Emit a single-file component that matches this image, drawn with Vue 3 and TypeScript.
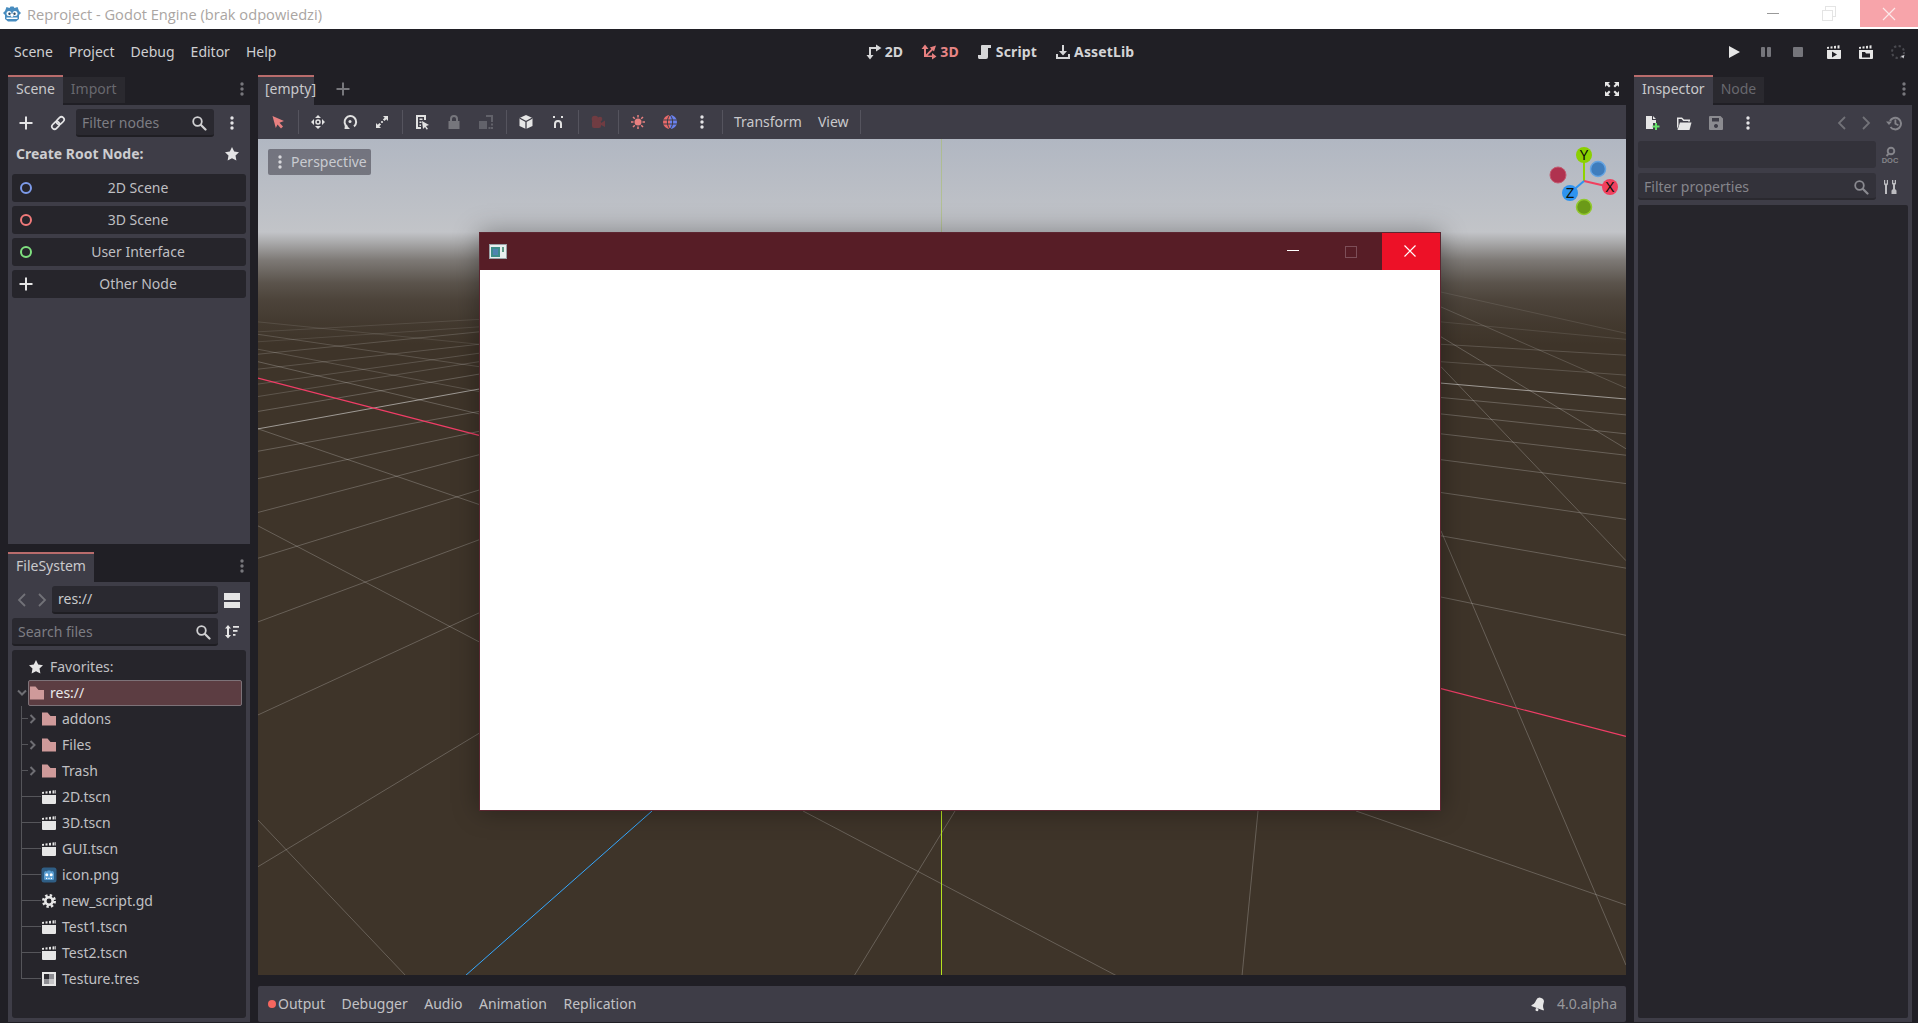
<script setup lang="ts">
type Seg = [number, number, number, number]

const rootButtons = [
  { label: '2D Scene', icon: 'ring', color: '#7d9bea' },
  { label: '3D Scene', icon: 'ring', color: '#f07a7a' },
  { label: 'User Interface', icon: 'ring', color: '#7fe07f' },
  { label: 'Other Node', icon: 'add', color: '#e6e6e6' },
]

const files = [
  { name: 'addons', icon: 'folder', branch: true },
  { name: 'Files', icon: 'folder', branch: true },
  { name: 'Trash', icon: 'folder', branch: true },
  { name: '2D.tscn', icon: 'clap', branch: false },
  { name: '3D.tscn', icon: 'clap', branch: false },
  { name: 'GUI.tscn', icon: 'clap', branch: false },
  { name: 'icon.png', icon: 'logo', branch: false },
  { name: 'new_script.gd', icon: 'gear', branch: false },
  { name: 'Test1.tscn', icon: 'clap', branch: false },
  { name: 'Test2.tscn', icon: 'clap', branch: false },
  { name: 'Testure.tres', icon: 'texture', branch: false },
]

const tools = [
  'select', '|', 'move', 'rotate', 'scale', '|', 'listsel', 'lock', 'group', '|',
  'cube', 'snap', '|', 'camera', '|', 'sun', 'globe', 'dots', '|',
]

const bottomTabs = ['Debugger', 'Audio', 'Animation', 'Replication']

// Floor grid, measured per visible area of the viewport (page coordinates).
const fromLeft = (y0: number, y1: number): Seg => [258, 200 + y0 / 2.01, 479, 200 + y1 / 2.01]
const fromRight = (y0: number, y1: number): Seg => [1441, 200 + y0 / 2.01, 1626, 200 + y1 / 2.01]

const gridLines: Seg[] = [
  ...[
    [1340, 1072], [1035, 830], [848, 683], [720, 583], [628, 512], [560, 465], [505, 425],
    [425, 350], [395, 325], [370, 308], [340, 290], [310, 265], [285, 255], [265, 240],
    [655, 888], [460, 612], [325, 430], [300, 385], [270, 335], [245, 290],
  ].map(([a, b]) => fromLeft(a, b)),
  ...[
    [245, 280], [290, 312], [325, 352], [397, 432], [430, 470], [470, 513], [522, 570],
    [588, 642], [675, 740], [798, 875], [665, 1538], [335, 725], [275, 500], [215, 378], [185, 268],
  ].map(([a, b]) => fromRight(a, b)),
  [258, 820, 406, 976],
  [803, 811, 1117, 976],
  [955, 811, 854, 976],
  [1258, 811, 1242, 976],
  [1356, 811, 1626, 905],
]
const lineOpacity = (l: Seg): number => {
  const y = (l[1] + l[3]) / 2
  return y < 335 ? 0.1 : y < 385 ? 0.16 : 0.22
}
const brightLines: Seg[] = [fromLeft(460, 380), fromRight(368, 400)]
const redLines: Seg[] = [fromLeft(358, 473), fromRight(982, 1078)]
</script>

<template>
  <div class="app">
    <svg class="sprite" aria-hidden="true">
      <symbol id="add" viewBox="0 0 16 16"><path fill="currentColor" d="M7 1.500h2V7h5.500v2H9v5.500H7V9H1.500V7H7z" /></symbol>
      <symbol id="dots" viewBox="0 0 16 16"><g fill="currentColor"><circle cx="8" cy="3" r="1.700" /><circle cx="8" cy="8" r="1.700" /><circle cx="8" cy="13" r="1.700" /></g></symbol>
      <symbol id="search" viewBox="0 0 16 16"><g fill="none" stroke="currentColor" stroke-width="1.800" stroke-linecap="round"><circle cx="6.500" cy="6.500" r="4.300" /><path d="M10 10l4.500 4.500" stroke-width="2.200" /></g></symbol>
      <symbol id="star" viewBox="0 0 16 16"><polygon fill="currentColor" points="8,1 10.200,5.600 15,6.200 11.500,9.600 12.400,14.600 8,12.200 3.600,14.600 4.500,9.600 1,6.200 5.800,5.600" /></symbol>
      <symbol id="link" viewBox="0 0 16 16"><g fill="none" stroke="currentColor" stroke-width="1.700" transform="rotate(-45 8 8)"><rect x="0.500" y="5.300" width="8.500" height="5.400" rx="2.700" /><rect x="7" y="5.300" width="8.500" height="5.400" rx="2.700" /></g></symbol>
      <symbol id="ring" viewBox="0 0 16 16"><circle cx="8" cy="8" r="5" fill="none" stroke="currentColor" stroke-width="2" /></symbol>
      <symbol id="select" viewBox="0 0 16 16"><polygon fill="#e88080" points="2.500,2 14,7 9.500,8.800 13,12.500 11,14.500 7.500,10.500 5.800,14" /></symbol>
      <symbol id="move" viewBox="0 0 16 16"><g fill="#e2e2e2"><path d="M8 1l3 3H5zM8 15l-3-3h6zM1 8l3-3v6zM15 8l-3 3V5z" /></g><circle cx="8" cy="8" r="2" fill="none" stroke="#e2e2e2" stroke-width="1.500" /></symbol>
      <symbol id="rotate" viewBox="0 0 16 16"><path d="M5.300 12.800A5.800 5.800 0 1 1 12 12.400" fill="none" stroke="#e2e2e2" stroke-width="2" /><polygon fill="#e2e2e2" points="2.500,15 8,15 3,9.800" /><circle cx="8" cy="7.500" r="1.500" fill="#e2e2e2" /></symbol>
      <symbol id="scale" viewBox="0 0 16 16"><path fill="#e2e2e2" d="M9 2h5v5l-1.700-1.700-1.800 1.800-1.600-1.600 1.800-1.800zM7 14H2V9l1.700 1.700 1.800-1.800 1.600 1.600-1.800 1.800z" /><circle cx="8" cy="8" r="1.100" fill="#e2e2e2" /></symbol>
      <symbol id="listsel" viewBox="0 0 16 16"><path fill="#e2e2e2" d="M2 1h10v5h-2V3H4v10h3v2H2zM5.500 4.500h3v1.500h-3zM5.500 7.500h2v1.500h-2zM5.500 10.500h1.500v1.500H5.500z" /><polygon fill="#e2e2e2" points="8,7 15,11 12,12 14,15 12.500,15.500 11,13 9,15" /></symbol>
      <symbol id="lock" viewBox="0 0 16 16"><path fill="#76767c" d="M4 7V5a4 4 0 0 1 8 0v2h1.500v8h-11V7zm2 0h4V5a2 2 0 0 0-4 0z" /></symbol>
      <symbol id="group" viewBox="0 0 16 16"><path fill="#62626a" d="M1 7h8v8H1zM8 1h7v7H13V3H8z" /><path fill="#62626a" d="M13 13h2v2h-2zM13 9.500h2v2h-2zM10.500 13h2v2h-2z" /></symbol>
      <symbol id="cube" viewBox="0 0 16 16"><polygon fill="#e6e6e6" points="8,1 14.500,4 14.500,12 8,15 1.500,12 1.500,4" /><path fill="none" stroke="#3e3d47" stroke-width="1.300" d="M1.500 4L8 7.500 14.500 4M8 7.500V15" /></symbol>
      <symbol id="snap" viewBox="0 0 16 16"><path fill="#e2e2e2" d="M3 2h2v2H3zM11 2h2v2h-2zM4 14V10a4 4 0 0 1 8 0v4h-2v-4a2 2 0 0 0-4 0v4z" /></symbol>
      <symbol id="camera" viewBox="0 0 16 16"><g fill="#703c42"><circle cx="5" cy="5" r="3.300" /><circle cx="10" cy="5" r="2.300" /><rect x="2" y="6" width="9" height="8" rx="2" /><polygon points="11,9 15,6.500 15,13 11,11" /></g></symbol>
      <symbol id="sun" viewBox="0 0 16 16"><circle cx="8" cy="8" r="3.500" fill="#e88080" /><g stroke="#e88080" stroke-width="1.500"><path d="M8 1v2.500M8 12.500V15M1 8h2.500M12.500 8H15M3 3l1.800 1.800M11.200 11.200L13 13M13 3l-1.800 1.800M4.800 11.200L3 13" /></g></symbol>
      <symbol id="globe" viewBox="0 0 16 16"><path fill="#e86a6a" d="M8 1a7 7 0 0 0 0 14z" /><path fill="#6a82ef" d="M8 1a7 7 0 0 1 0 14z" /><path fill="none" stroke="#3e3d47" stroke-width="1" d="M8 1c-3.500 3-3.500 11 0 14M8 1c3.500 3 3.500 11 0 14M1.300 6h13.400M1.300 10h13.400" /></symbol>
      <symbol id="fullscreen" viewBox="0 0 16 16"><path fill="#e6e6e6" d="M1 1h5L4.300 2.700 6.500 5 5 6.500 2.700 4.300 1 6zM15 1v5l-1.700-1.700L11 6.500 9.500 5l2.200-2.300L10 1zM1 15v-5l1.700 1.700L5 9.500 6.500 11l-2.200 2.300L6 15zM15 15h-5l1.700-1.700L9.500 11 11 9.500l2.300 2.200L15 10z" /></symbol>
      <symbol id="play" viewBox="0 0 16 16"><path fill="#e6e6e6" d="M3 2v12l11-6z" /></symbol>
      <symbol id="pause" viewBox="0 0 16 16"><rect x="3" y="3" width="4" height="10" rx="1" fill="#75757b" /><rect x="9" y="3" width="4" height="10" rx="1" fill="#75757b" /></symbol>
      <symbol id="stop" viewBox="0 0 16 16"><rect x="3" y="3" width="10" height="10" rx="1" fill="#75757b" /></symbol>
      <symbol id="clap" viewBox="0 0 16 16"><path fill="#e6e6e6" d="M1 6h14v8a1 1 0 0 1-1 1H2a1 1 0 0 1-1-1zM1 3l2-.3v2H1zM4.500 2.500l2-.3v2.400h-2zM8 2l2-.300v2.900H8zM11.500 1.500l2-.300v3.400h-2zM14.300 1.200L15 1v3.600h-.7z" /></symbol>
      <symbol id="clapplay" viewBox="0 0 16 16"><path fill="#e6e6e6" d="M1 6h14v8a1 1 0 0 1-1 1H2a1 1 0 0 1-1-1zM1 3l2-.3v2H1zM4.500 2.500l2-.3v2.400h-2zM8 2l2-.300v2.900H8zM11.500 1.500l2-.300v3.400h-2z" /><path fill="#201f25" d="M6 7.500v6l5-3z" /></symbol>
      <symbol id="clapfolder" viewBox="0 0 16 16"><path fill="#e6e6e6" d="M1 6h14v8a1 1 0 0 1-1 1H2a1 1 0 0 1-1-1zM1 3l2-.3v2H1zM4.500 2.500l2-.3v2.400h-2zM8 2l2-.300v2.900H8zM11.500 1.500l2-.300v3.400h-2z" /><path fill="#201f25" d="M4 8h3l1 1.500h4v4H4z" /></symbol>
      <symbol id="spin" viewBox="0 0 16 16"><circle cx="8" cy="8" r="6" fill="none" stroke="#4a4a50" stroke-width="2" stroke-dasharray="2.300 2.400" /><path fill="#cfcfd2" d="M11 12l3.500-1-1 3.500z" /></symbol>
      <symbol id="folder" viewBox="0 0 16 16"><path fill="#cf9a9a" d="M1 1.500h5.500L9.500 5H15v9.500H1z" /></symbol>
      <symbol id="gear" viewBox="0 0 16 16"><circle cx="8" cy="8" r="5.600" fill="none" stroke="#e6e6e6" stroke-width="2.800" stroke-dasharray="2.300 2.100" /><circle cx="8" cy="8" r="3.700" fill="none" stroke="#e6e6e6" stroke-width="2.500" /></symbol>
      <symbol id="texture" viewBox="0 0 16 16"><rect x="1" y="1" width="14" height="14" fill="#e6e6e6" /><rect x="3" y="3" width="5" height="5" fill="#2e2d33" /><rect x="8" y="3" width="5" height="5" fill="#8d8d92" /><rect x="3" y="8" width="5" height="5" fill="#8d8d92" /><rect x="8" y="8" width="5" height="5" fill="#c4c4c6" /></symbol>
      <symbol id="logo" viewBox="0 0 16 16"><rect x="0.500" y="0.500" width="15" height="15" rx="2.500" fill="#2f5e85" /><path fill="#5b9fd3" d="M3 6l1-2 2 .6.700-1.100h2.600l.7 1.100 2-.6 1 2v6.500l-2 .5H5l-2-.5z" /><g fill="#fff"><circle cx="5.800" cy="7.800" r="1.500" /><circle cx="10.200" cy="7.800" r="1.500" /><rect x="5" y="10.800" width="1.200" height="1.200" /><rect x="7.400" y="10.800" width="1.200" height="1.200" /><rect x="9.800" y="10.800" width="1.200" height="1.200" /></g></symbol>
      <symbol id="bell" viewBox="0 0 16 16"><g transform="rotate(20 8 8)"><path fill="#e6e6e6" d="M8 1.500a4 4 0 0 1 4 4c0 3.500 1.500 5 2.500 6v1h-13v-1c1-1 2.500-2.500 2.500-6a4 4 0 0 1 4-4z" /><circle cx="8" cy="14" r="1.500" fill="#e6e6e6" /></g></symbol>
      <symbol id="tools" viewBox="0 0 16 16"><path fill="#bdbdc1" d="M2 1h1.200v3.500h1.600V1H6v4.200L5 6.500V15H3V6.500L2 5.200zM10 1h1.300v3h1.400V1H14v3.800l-1 1.200v4l1.500 1.500V15h-5v-3.500L11 10V6l-1-1.200z" /></symbol>
      <symbol id="back" viewBox="0 0 16 16"><path fill="none" stroke="#727278" stroke-width="1.800" d="M11 2L5 8l6 6" /></symbol>
      <symbol id="forward" viewBox="0 0 16 16"><path fill="none" stroke="#727278" stroke-width="1.800" d="M5 2l6 6-6 6" /></symbol>
      <symbol id="history" viewBox="0 0 16 16"><path fill="none" stroke="#85858b" stroke-width="2" d="M4 6a5.800 5.800 0 1 1 .5 6" /><path fill="#85858b" d="M0 6.500h6L3 10zM8.500 4.500h1.800v3.800l2.500 1.200-.8 1.500-3.500-1.800z" /></symbol>
      <symbol id="newfile" viewBox="0 0 16 16"><path fill="#e6e6e6" d="M2 1h6v4h4v3H9v6H2zM9 1l3 3H9z" /><path fill="#65e06a" d="M11 8h2v2.500h2.500v2H13V15h-2v-2.500H8.500v-2H11z" /></symbol>
      <symbol id="open" viewBox="0 0 16 16"><path fill="#e6e6e6" d="M1 2.500h5l2 2h6v2h-2V6H7.300L5.500 4H2.500v6.500L1 14z" /><path fill="#e6e6e6" d="M4 7.500h11.500L13.500 15H1.500z" /></symbol>
      <symbol id="save" viewBox="0 0 16 16"><path fill="#8b8b90" fill-rule="evenodd" d="M1 2a1 1 0 0 1 1-1h10.500L15 3.500V14a1 1 0 0 1-1 1H2a1 1 0 0 1-1-1zM4 3v3.500h7V3zM8 9a2 2 0 1 0 .01 0z" /></symbol>
      <symbol id="split" viewBox="0 0 16 16"><rect x="0" y="1" width="16" height="7" fill="#e6e6e6" /><rect x="0" y="10" width="16" height="6" fill="#e6e6e6" /></symbol>
      <symbol id="sort" viewBox="0 0 16 16"><path fill="#e6e6e6" d="M4 1l3 3.500H5V11h2l-3 3.500L1 11h2V4.500H1zM9 2h6v1.800H9zM9 6h4.500v1.800H9zM9 10h2.500v1.800H9z" /></symbol>
      <symbol id="godot2d" viewBox="0 0 16 16"><path fill="#d6d6d8" d="M3 3h7V.5L15.500 4 10 7.500V5H5v6h2.500L4 15.500.5 11H3z" /></symbol>
      <symbol id="godot3d" viewBox="0 0 16 16"><g fill="#e88080"><path d="M4 .5L7.500 5H5v5.600L10.300 5 8.800 3.500 15 1.500l-2 6-1.300-1.300L6.500 11.500H11V9l4.500 3.500L11 15.500V13H3V5H.5z" /></g></symbol>
      <symbol id="script" viewBox="0 0 16 16"><path fill="#d6d6d8" d="M5 1h9v3h-3v9a2 2 0 0 1-2 2H2a2 2 0 0 1-1-2v-2h3V2a1 1 0 0 1 1-1z" /></symbol>
      <symbol id="assetlib" viewBox="0 0 16 16"><path fill="#d6d6d8" d="M7 1h2v6h3l-4 4.500L4 7h3zM1 10h2v3h10v-3h2v5H1z" /></symbol>
      <symbol id="chevdown" viewBox="0 0 12 12"><path fill="none" stroke="#6e6e73" stroke-width="2" d="M2 3.500l4 4 4-4" /></symbol>
      <symbol id="chevright" viewBox="0 0 12 12"><path fill="none" stroke="#6e6e73" stroke-width="2" d="M3.500 2l4 4-4 4" /></symbol>
      <symbol id="godot" viewBox="0 0 18 18"><path fill="#478cbf" d="M2 6l1.500-4 3 1 1-1.500h3l1 1.500 3-1L16 6l2 2-2 2v4l-3 2.500H5L2 14v-4L0 8z" /><circle cx="6" cy="8.500" r="2.500" fill="#fff" /><circle cx="12" cy="8.500" r="2.500" fill="#fff" /><circle cx="6.500" cy="8.700" r="1.200" fill="#2f4a63" /><circle cx="11.500" cy="8.700" r="1.200" fill="#2f4a63" /><rect x="7.900" y="9" width="2.200" height="2.800" fill="#fff" /><path fill="#fff" d="M3.500 12.500h11v1.500h-11z" /></symbol>
    </svg>

    <header class="title-bar">
      <svg class="logo"><use href="#godot" /></svg>
      <span class="title-text">Reproject - Godot Engine (brak odpowiedzi)</span>
      <div class="win-controls">
        <span class="wc wc-min"><i class="wc-dash" /></span>
        <span class="wc wc-max"><i class="wc-box wc-box-back" /><i class="wc-box" /></span>
        <span class="wc wc-close">
          <svg width="14" height="14" viewBox="0 0 14 14"><path d="M1 1l12 12M13 1L1 13" stroke="#fbe9ea" stroke-width="1.200" /></svg>
        </span>
      </div>
    </header>

    <nav class="menu-bar">
      <div class="menu-left">
        <span>Scene</span><span>Project</span><span>Debug</span><span>Editor</span><span>Help</span>
      </div>
      <div class="menu-center">
        <span class="ws"><svg class="ic14"><use href="#godot2d" /></svg>2D</span>
        <span class="ws ws-on"><svg class="ic14"><use href="#godot3d" /></svg>3D</span>
        <span class="ws"><svg class="ic14"><use href="#script" /></svg>Script</span>
        <span class="ws"><svg class="ic14"><use href="#assetlib" /></svg>AssetLib</span>
      </div>
      <div class="menu-right">
        <svg class="ic"><use href="#play" /></svg>
        <svg class="ic"><use href="#pause" /></svg>
        <svg class="ic stop-ic"><use href="#stop" /></svg>
        <svg class="ic"><use href="#clapplay" /></svg>
        <svg class="ic"><use href="#clapfolder" /></svg>
        <svg class="ic"><use href="#spin" /></svg>
      </div>
    </nav>

    <main class="main">
      <section class="left-col">
        <div class="dock scene-dock">
          <div class="tabs">
            <span class="tab tab-on">Scene</span>
            <span class="tab tab-off">Import</span>
            <svg class="ic tabs-menu"><use href="#dots" /></svg>
          </div>
          <div class="panel">
            <div class="scene-tools">
              <span class="btn"><svg class="ic"><use href="#add" /></svg></span>
              <span class="btn"><svg class="ic"><use href="#link" /></svg></span>
              <div class="input scene-filter">
                <span>Filter nodes</span>
                <svg class="ic"><use href="#search" /></svg>
              </div>
              <span class="btn"><svg class="ic"><use href="#dots" /></svg></span>
            </div>
            <div class="root-head">
              <b>Create Root Node:</b>
              <svg class="ic"><use href="#star" /></svg>
            </div>
            <div class="root-list">
              <div v-for="b in rootButtons" :key="b.label" class="root-btn">
                <svg class="ic" :style="{ color: b.color }"><use :href="'#' + b.icon" /></svg>
                <span>{{ b.label }}</span>
              </div>
            </div>
          </div>
        </div>

        <div class="dock fs-dock">
          <div class="tabs">
            <span class="tab tab-on">FileSystem</span>
            <svg class="ic tabs-menu"><use href="#dots" /></svg>
          </div>
          <div class="panel fs-panel">
            <div class="fs-row">
              <svg class="ic nav-ic"><use href="#back" /></svg>
              <svg class="ic nav-ic"><use href="#forward" /></svg>
              <div class="input fs-path"><span class="bright">res://</span></div>
              <svg class="ic split-ic"><use href="#split" /></svg>
            </div>
            <div class="fs-row fs-row-search">
              <div class="input fs-search">
                <span>Search files</span>
                <svg class="ic"><use href="#search" /></svg>
              </div>
              <svg class="ic sort-ic"><use href="#sort" /></svg>
            </div>
            <div class="tree">
              <div class="row row-fav">
                <svg class="ic row-star"><use href="#star" /></svg>
                <span>Favorites:</span>
              </div>
              <div class="row row-res">
                <svg class="chev"><use href="#chevdown" /></svg>
                <div class="res-sel">
                  <svg class="ic"><use href="#folder" /></svg>
                  <span>res://</span>
                </div>
              </div>
              <div class="children">
                <div v-for="f in files" :key="f.name" class="row row-child" :class="{ 'has-chev': f.branch }">
                  <svg v-if="f.branch" class="chev"><use href="#chevright" /></svg>
                  <svg class="ic"><use :href="'#' + f.icon" /></svg>
                  <span>{{ f.name }}</span>
                </div>
              </div>
            </div>
          </div>
        </div>
      </section>

      <section class="center-col">
        <div class="tabs center-tabs">
          <span class="tab tab-on">[empty]</span>
          <svg class="ic tab-add"><use href="#add" /></svg>
          <svg class="ic tabs-menu"><use href="#fullscreen" /></svg>
        </div>
        <div class="toolbar">
          <template v-for="(t, i) in tools" :key="i">
            <i v-if="t === '|'" class="sep"><i class="sep-line" /></i>
            <span v-else class="btn"><svg class="ic"><use :href="'#' + t" /></svg></span>
          </template>
          <span class="tool-text tool-transform">Transform</span>
          <span class="tool-text tool-view">View</span>
          <i class="sep"><i class="sep-line" /></i>
        </div>

        <div class="viewport">
          <svg class="scene3d" viewBox="258 139 1368 836" preserveAspectRatio="none">
            <defs>
              <linearGradient id="sky" gradientUnits="userSpaceOnUse" x1="0" y1="139" x2="0" y2="232">
                <stop offset="0" stop-color="#b1b7c2" />
                <stop offset="1" stop-color="#c2c4c8" />
              </linearGradient>
              <linearGradient id="fog" gradientUnits="userSpaceOnUse" x1="0" y1="232" x2="0" y2="345">
                <stop offset="0" stop-color="#c2c4c8" stop-opacity="1" />
                <stop offset="0.1" stop-color="#c2c4c8" stop-opacity="0.8" />
                <stop offset="0.25" stop-color="#c2c4c8" stop-opacity="0.48" />
                <stop offset="0.45" stop-color="#c2c4c8" stop-opacity="0.22" />
                <stop offset="0.6" stop-color="#c2c4c8" stop-opacity="0.11" />
                <stop offset="0.8" stop-color="#c2c4c8" stop-opacity="0.04" />
                <stop offset="1" stop-color="#c2c4c8" stop-opacity="0" />
              </linearGradient>
            </defs>
            <g stroke="#ffffff" stroke-width="1">
              <line v-for="(l, i) in gridLines" :key="i" :x1="l[0]" :y1="l[1]" :x2="l[2]" :y2="l[3]" :stroke-opacity="lineOpacity(l)" />
            </g>
            <g stroke="#ffffff" stroke-opacity="0.5" stroke-width="1">
              <line v-for="(l, i) in brightLines" :key="i" :x1="l[0]" :y1="l[1]" :x2="l[2]" :y2="l[3]" />
            </g>
            <g stroke="#f13d67" stroke-width="1.200">
              <line v-for="(l, i) in redLines" :key="i" :x1="l[0]" :y1="l[1]" :x2="l[2]" :y2="l[3]" />
            </g>
            <line x1="652" y1="811" x2="465" y2="976" stroke="#35a8ff" stroke-width="1" />
            <line x1="941.500" y1="232" x2="941.500" y2="975" stroke="#b6e21f" stroke-width="1" />
            <rect x="258" y="139" width="1368" height="93" fill="url(#sky)" />
            <rect x="258" y="232" width="1368" height="113" fill="url(#fog)" />
            <line x1="941.500" y1="139" x2="941.500" y2="232" stroke="#a7c060" stroke-opacity="0.5" stroke-width="1" />
          </svg>

          <div class="perspective">
            <svg class="ic"><use href="#dots" /></svg>
            <span>Perspective</span>
          </div>

          <svg class="gizmo" width="80" height="80" viewBox="0 0 80 80">
            <circle cx="14" cy="32" r="8" fill="#b0324f" stroke="#c45a70" stroke-width="1" />
            <circle cx="54" cy="26" r="7.500" fill="#3f7dbd" stroke="#65a4e2" stroke-width="1.500" />
            <circle cx="40" cy="64" r="7.500" fill="#6b9a18" stroke="#92c92d" stroke-width="1.500" />
            <path d="M40 38V12" stroke="#8fd400" stroke-width="2" />
            <path d="M40 38L66 44" stroke="#f1405f" stroke-width="2" />
            <path d="M40 38L26 50" stroke="#2e93f0" stroke-width="2" />
            <circle cx="40" cy="12" r="8" fill="#8bd000" />
            <circle cx="66" cy="44" r="8" fill="#f1405f" />
            <circle cx="26" cy="50" r="8" fill="#2e93f0" />
            <g class="gizmo-text">
              <text x="40" y="17">Y</text>
              <text x="66" y="49">X</text>
              <text x="26" y="55">Z</text>
            </g>
          </svg>

          <div class="popup">
            <div class="popup-title">
              <svg class="popup-icon" width="18" height="15" viewBox="0 0 18 15">
                <rect width="18" height="15" fill="#9aa2a6" />
                <rect x="1" y="1" width="16" height="13" fill="#e8eeee" />
                <rect x="2" y="3" width="9" height="10" fill="#3d8d8a" />
                <rect x="4" y="5" width="5" height="6" fill="#4f83b0" />
                <rect x="13" y="3" width="2" height="5" fill="#5f9a86" />
              </svg>
              <span class="popup-min"><i /></span>
              <span class="popup-max"><i /></span>
              <span class="popup-close">
                <svg width="14" height="14" viewBox="0 0 14 14"><path d="M1.500 1.500l11 11M12.500 1.500l-11 11" stroke="#fff" stroke-width="1.200" /></svg>
              </span>
            </div>
            <div class="popup-body" />
          </div>
        </div>

        <footer class="bottom-bar">
          <span class="bottom-output"><i class="out-dot" />Output</span>
          <span v-for="t in bottomTabs" :key="t">{{ t }}</span>
          <span class="bottom-spacer" />
          <svg class="ic bell"><use href="#bell" /></svg>
          <span class="version">4.0.alpha</span>
        </footer>
      </section>

      <section class="right-col">
        <div class="dock insp-dock">
          <div class="tabs">
            <span class="tab tab-on">Inspector</span>
            <span class="tab tab-off">Node</span>
            <svg class="ic tabs-menu"><use href="#dots" /></svg>
          </div>
          <div class="panel insp-panel">
            <div class="insp-tools">
              <span class="btn"><svg class="ic"><use href="#newfile" /></svg></span>
              <span class="btn"><svg class="ic"><use href="#open" /></svg></span>
              <span class="btn"><svg class="ic"><use href="#save" /></svg></span>
              <span class="btn"><svg class="ic"><use href="#dots" /></svg></span>
              <span class="bottom-spacer" />
              <span class="btn-n"><svg class="ic"><use href="#back" /></svg></span>
              <span class="btn-n"><svg class="ic"><use href="#forward" /></svg></span>
              <span class="btn-h"><svg class="ic"><use href="#history" /></svg></span>
            </div>
            <div class="insp-row">
              <div class="insp-input" />
              <svg class="doc-ic" width="16" height="18" viewBox="0 0 16 18">
                <circle cx="9" cy="5" r="3.300" fill="none" stroke="#85858b" stroke-width="1.900" />
                <path stroke="#85858b" stroke-width="1.900" d="M6.800 7.600L4.500 10" />
                <text x="8" y="17" text-anchor="middle" class="doc-text">DOC</text>
              </svg>
            </div>
            <div class="insp-row insp-row-filter">
              <div class="insp-input insp-filter">
                <span>Filter properties</span>
                <svg class="ic"><use href="#search" /></svg>
              </div>
              <svg class="ic"><use href="#tools" /></svg>
            </div>
            <div class="insp-body" />
          </div>
        </div>
      </section>
    </main>
  </div>
</template>

<style>
html, body { margin: 0; background: #201f25; overflow: hidden; }
</style>

<style scoped>
.app {
  width: 1918px;
  height: 1023px;
  display: flex;
  flex-direction: column;
  background: #201f25;
  color: #c9c9cc;
  font: 14px/20px "Noto Sans", sans-serif;
  overflow: hidden;
}
.sprite { position: absolute; width: 0; height: 0; overflow: hidden; }
i { display: block; font-style: normal; }
.ic { width: 16px; height: 16px; flex: none; display: block; color: #e4e4e6; }
.ic14 { width: 16px; height: 16px; flex: none; display: block; }

/* title bar */
.title-bar { height: 29px; flex: none; background: #fff; display: flex; align-items: flex-start; position: relative; }
.logo { width: 18px; height: 18px; margin: 5px 0 0 3px; flex: none; }
.title-text { margin: 3px 0 0 6px; font: 14.650px/22px "Open Sans", "Noto Sans", sans-serif; color: #aaa5a2; white-space: nowrap; }
.win-controls { margin-left: auto; display: flex; height: 27px; }
.wc { width: 58px; height: 27px; display: flex; align-items: center; justify-content: center; position: relative; }
.wc-dash { width: 12px; height: 1px; background: #999; margin-bottom: 1px; }
.wc-max { margin-left: -3px; margin-right: 3px; }
.wc-box { width: 9px; height: 9px; border: 1px solid #e4e4e4; background: #fff; position: relative; margin: 3px 0 0 -2px; }
.wc-box-back { position: absolute; left: 26px; top: 6px; margin: 0; }
.wc-close { background: #f7a4aa; }

/* menu */
.menu-bar { height: 46px; flex: none; display: flex; align-items: center; justify-content: space-between; padding: 0 12px 0 14px; color: #cfcfd2; }
.menu-left { display: flex; gap: 16px; width: 263px; }
.menu-center { display: flex; gap: 18px; font-weight: 700; color: #d4d4d6; letter-spacing: .15px; }
.ws { display: flex; align-items: center; gap: 3px; }
.ws-on { color: #e88686; }
.menu-right { display: flex; gap: 16px; padding-left: 3px; }
.stop-ic { margin-right: 4px; }

/* main */
.main { flex: 1; min-height: 0; display: flex; padding: 0 6px 1px 8px; gap: 8px; }
.left-col { width: 242px; flex: none; display: flex; flex-direction: column; gap: 8px; }
.center-col { width: 1368px; flex: none; display: flex; flex-direction: column; }
.right-col { width: 278px; flex: none; display: flex; }
.dock { display: flex; flex-direction: column; min-height: 0; }
.scene-dock { height: 469px; flex: none; }
.fs-dock { flex: 1; }
.insp-dock { flex: 1; }

.tabs { height: 30px; flex: none; display: flex; align-items: flex-start; position: relative; }
.tab { height: 30px; box-sizing: border-box; padding: 0 8px; line-height: 24px; white-space: nowrap; }
.tab-on { background: #3e3d47; border-top: 2px solid #b96c6c; color: #c9c9cc; }
.tab-off { height: 26px; margin-top: 2px; background: #2a292f; color: #68686e; line-height: 24px; }
.tabs-menu { position: absolute; right: 0; top: 6px; color: #77777c; }
.panel { flex: 1; min-height: 0; background: #3e3d47; }

.btn { width: 32px; height: 28px; display: flex; align-items: center; justify-content: center; flex: none; }
.input {
  height: 28px; box-sizing: border-box; display: flex; align-items: center; justify-content: space-between;
  background: #2a2930; border-bottom: 2px solid #1f1e23; border-radius: 3px;
  padding: 2px 7px 0 6px; color: #7d7d83; flex: none;
}
.input .ic { color: #d0d0d2; }

/* scene */
.scene-tools { display: flex; align-items: center; padding: 4px 2px 0; }
.scene-filter { width: 138px; margin: 0 2px; }
.root-head { display: flex; align-items: center; justify-content: space-between; padding: 0 10px 0 8px; height: 32px; margin-top: 1px; color: #cdcdd0; }
.root-list { display: flex; flex-direction: column; gap: 4px; padding: 4px 4px 0; }
.root-btn { height: 28px; background: #26252b; border-radius: 3px; display: flex; align-items: center; padding-left: 6px; color: #bfbfc2; }
.root-btn span { flex: 1; text-align: center; padding-right: 4px; }

/* filesystem */
.fs-panel { display: flex; flex-direction: column; padding: 4px 4px 4px; }
.fs-row { height: 28px; flex: none; display: flex; align-items: center; }
.fs-row-search { margin-top: 4px; }
.nav-ic { margin: 0 2px; }
.fs-path { width: 166px; padding-top: 0; }
.split-ic { margin-left: 6px; color: #e6e6e6; }
.fs-search { width: 206px; }
.sort-ic { margin-left: 6px; }
.bright { color: #c9c9cc; }
.tree { flex: 1; margin-top: 4px; background: #26252b; border-radius: 3px; padding: 4px 0; position: relative; color: #c0c0c3; }
.row { height: 26px; display: flex; align-items: center; gap: 6px; position: relative; }
.row-fav { padding-left: 16px; }
.row-star { color: #e6e6e6; }
.row-res { padding: 0 4px 0 4px; gap: 0; }
.chev { width: 12px; height: 12px; flex: none; display: block; }
.res-sel {
  flex: 1; height: 26px; box-sizing: border-box; display: flex; align-items: center; gap: 5px;
  background: #5c3d42; border: 1px solid #7d7278; border-radius: 2px; color: #e8e8ea;
}
.children { position: relative; }
.children::before { content: ""; position: absolute; left: 9px; top: 0; height: 273px; width: 1px; background: #55555a; }
.row-child { padding-left: 29px; gap: 5px; }
.row-child::before { content: ""; position: absolute; left: 9px; top: 12px; width: 20px; height: 1px; background: #55555a; }
.row-child.has-chev::before { width: 7px; }
.row-child .chev { position: absolute; left: 15px; top: 7px; }

/* center */
.tab-add { color: #77777c; margin: 6px 0 0 21px; }
.center-tabs .tab { width: 56px; padding: 0 7px; }
.center-tabs .tabs-menu { right: 6px; color: #e6e6e6; }
.toolbar { height: 34px; flex: none; background: #3e3d47; display: flex; align-items: center; padding-left: 4px; }
.sep { width: 8px; height: 24px; flex: none; display: flex; justify-content: center; }
.sep-line { width: 1px; height: 24px; background: #55545e; }
.tool-text { color: #c9c9cc; white-space: nowrap; }
.tool-transform { padding: 0 8px; }
.tool-view { padding: 0 8px; }

.viewport { height: 836px; flex: none; position: relative; background: #3e3429; overflow: hidden; }
.scene3d { position: absolute; inset: 0; width: 100%; height: 100%; display: block; }
.perspective {
  position: absolute; left: 10px; top: 10px; height: 26px; width: 103px; box-sizing: border-box;
  background: rgba(62, 61, 71, .55); border-radius: 2px; display: flex; align-items: center; gap: 3px; padding-left: 4px; color: #c9cbd1;
}
.perspective .ic { color: #d8d8dc; }
.gizmo { position: absolute; left: 1286px; top: 4px; }
.gizmo-text text { font: 15px "Noto Sans", sans-serif; text-anchor: middle; fill: #0c1208; }

.popup {
  position: absolute; left: 221px; top: 93px; width: 962px; height: 579px; box-sizing: border-box;
  border: 1px solid #5d2631; box-shadow: 0 0 24px rgba(0, 0, 0, .35);
  display: flex; flex-direction: column;
}
.popup-title { height: 37px; flex: none; background: #571d26; display: flex; align-items: center; position: relative; }
.popup-icon { margin-left: 9px; }
.popup-min { position: absolute; left: 807px; top: 17px; width: 12px; height: 1px; }
.popup-min i { width: 12px; height: 1px; background: #fff; }
.popup-max { position: absolute; left: 865px; top: 13px; }
.popup-max i { width: 10px; height: 10px; border: 1px solid #7d4e58; }
.popup-close { position: absolute; right: 0; top: 0; width: 58px; height: 37px; background: #ed1127; display: flex; align-items: center; justify-content: center; }
.popup-close svg { margin-left: -2px; margin-top: -1px; }
.popup-body { flex: 1; background: #fff; }

.bottom-bar {
  height: 36px; flex: none; margin-top: 11px; background: #3e3d47; display: flex; align-items: center;
  gap: 16.500px; padding: 0 9px 0 10px; border-radius: 2px; color: #c2c2c5;
}
.bottom-output { display: flex; align-items: center; gap: 2px; }
.out-dot { width: 8px; height: 8px; border-radius: 50%; background: #f5665f; }
.bottom-spacer { flex: 1; }
.bell { margin-right: -6.500px; }
.version { color: #98989c; }

/* inspector */
.insp-panel { display: flex; flex-direction: column; padding: 4px; box-sizing: border-box; }
.insp-tools { display: flex; align-items: center; height: 28px; margin: 0 -2px 0 -2px; flex: none; }
.btn-n { width: 24px; display: flex; justify-content: center; }
.btn-h { width: 32px; display: flex; justify-content: center; }
.insp-row { display: flex; align-items: center; justify-content: space-between; height: 27px; margin-top: 4px; padding-right: 10px; flex: none; }
.insp-row-filter { margin-top: 5px; }
.insp-input { width: 238px; height: 27px; box-sizing: border-box; background: #33323a; border-radius: 3px; }
.insp-filter { display: flex; align-items: center; justify-content: space-between; padding: 2px 7px 0 6px; color: #85858b; border-bottom: 2px solid #2a292f; }
.insp-filter .ic { color: #8a8a90; }
.doc-ic { display: block; flex: none; overflow: visible; }
.doc-text { font: 700 7.500px "Liberation Sans", sans-serif; fill: #85858b; }
.insp-body { flex: 1; margin-top: 5px; background: #26252b; border-radius: 2px; }
</style>
